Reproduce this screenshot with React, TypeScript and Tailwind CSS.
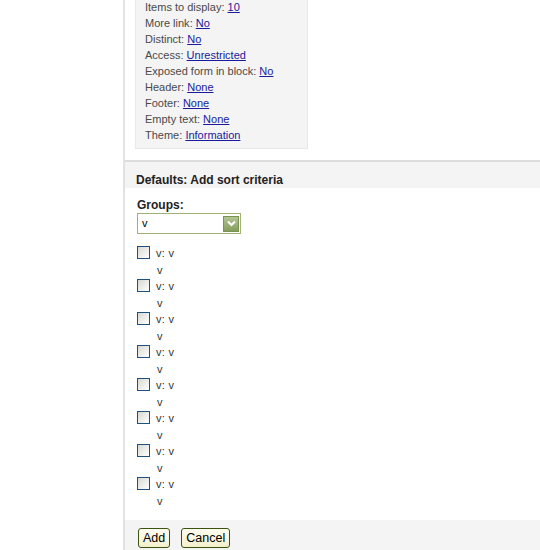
const font = { fontFamily: '"Liberation Sans", Arial, sans-serif' }

const settings: [string, string][] = [
  ["Items to display", "10"],
  ["More link", "No"],
  ["Distinct", "No"],
  ["Access", "Unrestricted"],
  ["Exposed form in block", "No"],
  ["Header", "None"],
  ["Footer", "None"],
  ["Empty text", "None"],
  ["Theme", "Information"],
]

function Checkbox() {
  return (
    <span className="block w-[13px] h-[13px] border border-[#1c5180] bg-gradient-to-br from-[#d8d8d2] to-white shrink-0" />
  )
}

function Button({ label }: { label: string }) {
  return (
    <button className="h-[20px] px-[4px] border border-[#3a5410] rounded-[3px] bg-gradient-to-b from-[#fffff2] to-[#f4efcc] text-[12.5px] leading-[18px] text-black">
      {label}
    </button>
  )
}

export default function App() {
  return (
    <div className="flex w-full h-[550px] overflow-hidden bg-white text-[#494949]" style={font}>
      <div className="w-[123px] shrink-0" />
      <div className="flex-1 flex flex-col border-l-2 border-[#e2e2e2]">
        <div className="pl-[10px] pb-[11px]">
          <div className="w-[173px] bg-[#f4f4f4] border border-t-0 border-[#e8e8e8] px-[9px] pb-[5px] -mt-[1px] text-[11px] leading-[16px]">
            {settings.map(([label, value]) => (
              <div key={label}>
                {label}: <a className="text-[#1a1a9c] underline">{value}</a>
              </div>
            ))}
          </div>
        </div>

        <div className="border-t-2 border-[#dcdcdc] bg-[#f4f4f4] h-[28px] pl-[11px] pt-[11px]">
          <div className="text-[12px] leading-[14px] font-bold text-[#222]">Defaults: Add sort criteria</div>
        </div>

        <div className="flex-1 pl-[12px] pt-[10px]">
          <div className="text-[12px] leading-[14px] font-bold text-[#222]">Groups:</div>
          <div className="mt-[1px] w-[104px] h-[21px] border border-[#9fb274] flex items-center justify-between pl-[4px] pr-[1px]">
            <span className="text-[11px] text-black">v</span>
            <span className="w-[16px] h-[16px] border border-[#7b9350] bg-gradient-to-b from-[#b4c495] to-[#869e5c] flex items-center justify-center">
              <svg width="9" height="7" viewBox="0 0 9 7">
                <path d="M1 1.5 L4.5 5 L8 1.5" fill="none" stroke="white" strokeWidth="2" />
              </svg>
            </span>
          </div>

          <div className="mt-[11px] flex flex-col">
            {Array.from({ length: 8 }).map((_, i) => (
              <div key={i} className="flex gap-[6px] h-[33px]">
                <div className="pt-[1px]">
                  <Checkbox />
                </div>
                <div className="text-[11px] leading-[16px] text-[#333]">
                  <div className="tracking-[0.3px]">v: v</div>
                  <div className="pl-[1px] pt-[1px]">v</div>
                </div>
              </div>
            ))}
          </div>
        </div>

        <div className="h-[30px] bg-[#f4f4f4] pl-[13px] pt-[8px] flex gap-[11px] items-start">
          <Button label="Add" />
          <Button label="Cancel" />
        </div>
      </div>
    </div>
  )
}
